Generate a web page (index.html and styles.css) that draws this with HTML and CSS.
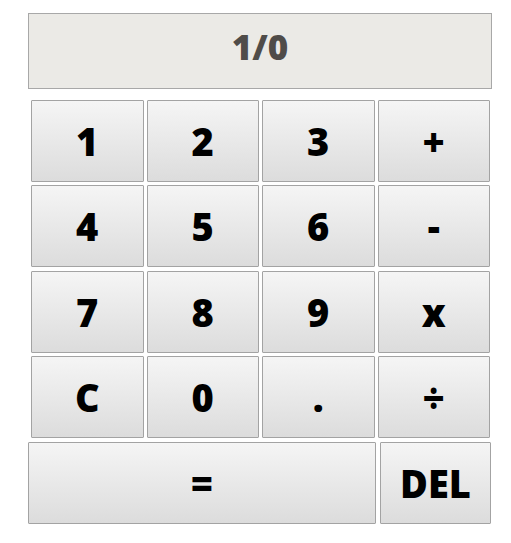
FILE: index.html
```html
<!DOCTYPE html>
<html>
<head>
<meta charset="utf-8">
<link rel="stylesheet" href="styles.css">
</head>
<body>
<div class="calc">
  <div class="display">1/0</div>
  <div class="keys">
    <button class="key">1</button>
    <button class="key">2</button>
    <button class="key">3</button>
    <button class="key">+</button>
    <button class="key">4</button>
    <button class="key">5</button>
    <button class="key">6</button>
    <button class="key">-</button>
    <button class="key">7</button>
    <button class="key">8</button>
    <button class="key">9</button>
    <button class="key">x</button>
    <button class="key">C</button>
    <button class="key">0</button>
    <button class="key">.</button>
    <button class="key">÷</button>
  </div>
  <div class="bottom">
    <button class="key">=</button>
    <button class="key">DEL</button>
  </div>
</div>
</body>
</html>
```
FILE: styles.css
```css
html, body {
  margin: 0;
  padding: 0;
  background: #ffffff;
}
.calc {
  width: 464px;
  margin: 13px 0 0 28px;
  display: flex;
  flex-direction: column;
}
.display {
  box-sizing: border-box;
  height: 76px;
  padding-bottom: 10px;
  background: #ebeae6;
  border: 1px solid #a8a8a8;
  color: #4f4c49;
  font-family: "Open Sans", sans-serif;
  font-weight: 800;
  font-size: 35px;
  display: flex;
  align-items: center;
  justify-content: center;
}
.keys {
  margin: 11px 2px 0 3px;
  display: grid;
  grid-template-columns: repeat(4, 1fr);
  grid-auto-rows: 82px;
  column-gap: 3px;
  row-gap: 3.3px;
}
.key {
  box-sizing: border-box;
  margin: 0;
  padding: 0;
  border: 1px solid #a3a3a3;
  border-radius: 1px;
  background: linear-gradient(#f5f5f5, #dcdcdc);
  color: #000000;
  font-family: "Open Sans", sans-serif;
  font-weight: 800;
  font-size: 38px;
  line-height: 1;
  display: flex;
  align-items: center;
  justify-content: center;
}
.bottom {
  margin-top: 4px;
  display: grid;
  grid-template-columns: 348px 111px;
  column-gap: 4px;
  grid-auto-rows: 82px;
}
```
